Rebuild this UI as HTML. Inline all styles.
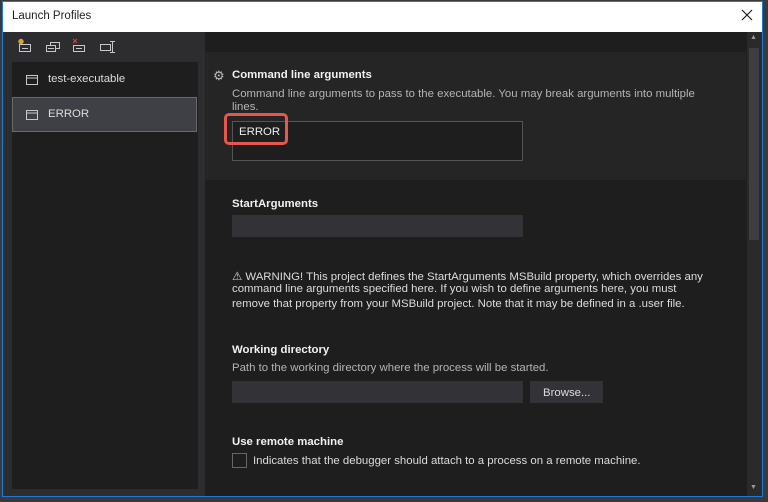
<!DOCTYPE html>
<html><head><style>
*{margin:0;padding:0;box-sizing:border-box}
body{width:768px;height:502px;background:#3a3a3c;position:relative;overflow:hidden;font-family:"Liberation Sans",sans-serif;font-size:11.4px;color:#dcdcdc}
div,span{position:absolute}
.t{white-space:nowrap}
.b{font-weight:bold;color:#f1f1f1}
.g{color:#b4b4b4}
</style></head><body>
<div style="left:2px;top:1px;width:761px;height:496px;border:1px solid #1c7cd6;background:#2d2d30"></div>
<div style="left:3px;top:2px;width:759px;height:30px;background:#fff"></div>
<span class="t" style="left:12px;top:10px;color:#1e1e1e;font-size:11.5px">Launch Profiles</span>
<svg style="position:absolute;left:741px;top:9px" width="12" height="12" stroke="#1e1e1e" stroke-width="1.2"><path d="M1 1L11 11M11 1L1 11"/></svg>
<!-- toolbar icons -->
<svg style="position:absolute;left:16px;top:37px" width="104" height="18" fill="none" stroke="#c8c8c8" stroke-width="1">
<rect x="3.5" y="7.5" width="11" height="7"/><line x1="6" y1="11.5" x2="12" y2="11.5"/><circle cx="5" cy="4.5" r="2.2" stroke="#d8a030" fill="#d8a030"/>
<rect x="30.5" y="8.5" width="9" height="6"/><path d="M34.5 8.5V5.5h9v6h-4"/><line x1="32" y1="11.5" x2="38" y2="11.5"/>
<rect x="57.5" y="8.5" width="11" height="6"/><line x1="60" y1="11.5" x2="66" y2="11.5"/><path d="M57 2l4 4M61 2l-4 4" stroke="#e04040"/>
<rect x="84.5" y="7.5" width="10" height="6"/><path d="M94 4.5h5M96.5 4.5v11M94 15.5h5"/>
</svg>
<div style="left:12px;top:62px;width:186px;height:427px;background:#1e1e1e"></div>
<div style="left:12px;top:97px;width:185px;height:35px;background:#3f3f46;border:1px solid #6a6a6a"></div>
<svg style="position:absolute;left:25px;top:74px" width="14" height="12" fill="none" stroke="#c8c8c8"><rect x="1.5" y="1.5" width="11" height="9"/><line x1="1.5" y1="4" x2="12.5" y2="4"/></svg>
<span class="t" style="left:48px;top:73px">test-executable</span>
<svg style="position:absolute;left:25px;top:109px" width="14" height="12" fill="none" stroke="#c8c8c8"><rect x="1.5" y="1.5" width="11" height="9"/><line x1="1.5" y1="4" x2="12.5" y2="4"/></svg>
<span class="t" style="left:48px;top:108px">ERROR</span>
<!-- right panel -->
<div style="left:205px;top:32px;width:557px;height:464px;background:#1e1e1e"></div>
<div style="left:205px;top:52px;width:541px;height:128px;background:#252526"></div>
<div style="left:747px;top:32px;width:15px;height:464px;background:#2a2a2b"></div>
<div style="left:749px;top:48px;width:10px;height:192px;background:#3e3e42"></div>
<span class="t" style="left:750px;top:34px;color:#999;font-size:7px">▲</span>
<span class="t" style="left:750px;top:484px;color:#999;font-size:7px">▼</span>
<span class="t" style="left:213px;top:68px;color:#bbb;font-size:13px">⚙</span>
<span class="t b" style="left:232px;top:69px">Command line arguments</span>
<span class="t g" style="left:232px;top:88px">Command line arguments to pass to the executable. You may break arguments into multiple</span>
<span class="t g" style="left:232px;top:101px">lines.</span>
<div style="left:232px;top:121px;width:291px;height:40px;background:#1e1e1e;border:1px solid #555"></div>
<div style="left:224px;top:113px;width:64px;height:32px;border:3px solid #e8574e;border-radius:5px"></div>
<span class="t" style="left:239px;top:126px;color:#eee">ERROR</span>
<span class="t b" style="left:232px;top:198px">StartArguments</span>
<div style="left:232px;top:215px;width:291px;height:22px;background:#333337"></div>
<span class="t" style="left:232px;top:269px">⚠ WARNING! This project defines the StartArguments MSBuild property, which overrides any</span>
<span class="t" style="left:232px;top:283px">command line arguments specified here. If you wish to define arguments here, you must</span>
<span class="t" style="left:232px;top:298px">remove that property from your MSBuild project. Note that it may be defined in a .user file.</span>
<span class="t b" style="left:232px;top:344px">Working directory</span>
<span class="t g" style="left:232px;top:362px">Path to the working directory where the process will be started.</span>
<div style="left:232px;top:381px;width:291px;height:22px;background:#333337"></div>
<div style="left:530px;top:381px;width:73px;height:22px;background:#333337"></div>
<span class="t" style="left:543px;top:387px">Browse...</span>
<span class="t b" style="left:232px;top:436px">Use remote machine</span>
<div style="left:232px;top:453px;width:15px;height:15px;border:1px solid #666;background:#1e1e1e"></div>
<span class="t" style="left:253px;top:455px">Indicates that the debugger should attach to a process on a remote machine.</span>
</body></html>
